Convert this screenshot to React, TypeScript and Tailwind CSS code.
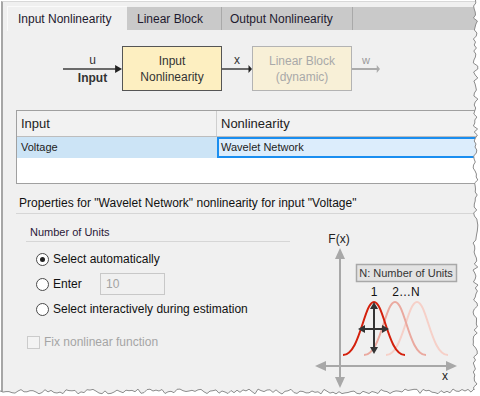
import React from 'react'

// jagged "torn paper" edge along the right and bottom of the screenshot
function tornEdge() {
  let seed = 7
  const rnd = () => {
    seed = (seed * 9301 + 49297) % 233280
    return seed / 233280
  }
  const pts: [number, number][] = []
  for (let y = 0; y <= 390; y += 3) pts.push([473 + rnd() * 5, y])
  for (let x = 474; x >= 0; x -= 3) pts.push([x, 389 + rnd() * 5])
  const line = pts.map((p, i) => `${i ? 'L' : 'M'}${p[0].toFixed(1)},${p[1].toFixed(1)}`).join(' ')
  const fill = `M480,0 ${line.replace('M', 'L')} L0,396 L480,396 Z`
  return { line, fill }
}
const edge = tornEdge()

function Arrow({ w, label, below, faded }: { w: string; label: string; below?: string; faded?: boolean }) {
  const c = faded ? '#ababab' : '#6a6a6a'
  const head = faded ? '#ababab' : '#222'
  return (
    <div className={`${w} h-[45px] flex flex-col justify-center items-center`}>
      <div className={`h-[10px] leading-[10px] ${faded ? 'text-[11px] text-[#9a9a9a]' : 'text-[12px] text-[#333]'}`}>{label}</div>
      <svg className="w-full h-[8px]" viewBox="0 0 60 8" preserveAspectRatio="none">
        <line x1="0" y1="4" x2="54" y2="4" stroke={c} strokeWidth="2" />
        <polygon points="53,0 60,4 53,8" fill={head} />
      </svg>
      <div className="h-[10px] leading-[10px] text-[12px] font-bold text-[#333]">{below}</div>
    </div>
  )
}

function Radio({ checked, children }: { checked?: boolean; children: React.ReactNode }) {
  return (
    <div className="flex items-center">
      <span className="w-[13px] h-[13px] rounded-full border border-[#4a4a4a] bg-white flex items-center justify-center">
        {checked && <span className="w-[5px] h-[5px] rounded-full bg-[#222]" />}
      </span>
      <span className="ml-[4px] text-[12px] text-[#111]">{children}</span>
    </div>
  )
}

function bell(cx: number) {
  return `M${cx - 31},355 C${cx - 14},355 ${cx - 10},302 ${cx},302 C${cx + 10},302 ${cx + 14},355 ${cx + 31},355`
}

function Figure() {
  return (
    <svg width="170" height="172" className="ml-[10px] mt-[8px] shrink-0">
      <g transform="translate(-300,-222)">
        <text x="339" y="243" textAnchor="middle" fontSize="12" fill="#222">F(x)</text>
        <line x1="340" y1="256" x2="340" y2="380" stroke="#a8a8a8" strokeWidth="2" />
        <polygon points="340,248 335,259 345,259" fill="#a8a8a8" />
        <polygon points="340,388 335,377 345,377" fill="#a8a8a8" />
        <line x1="323" y1="366" x2="449" y2="366" stroke="#a8a8a8" strokeWidth="2" />
        <polygon points="315,366 326,361 326,371" fill="#a8a8a8" />
        <polygon points="457,366 446,361 446,371" fill="#a8a8a8" />
        <text x="445" y="380" textAnchor="middle" fontSize="12" fill="#222">x</text>
        <rect x="356.5" y="264.5" width="100" height="17" fill="#e3e3e3" stroke="#a8a8a8" strokeWidth="1.5" />
        <text x="406" y="277" textAnchor="middle" fontSize="11" fill="#333">N: Number of Units</text>
        <text x="374" y="296" textAnchor="middle" fontSize="12" fill="#111">1</text>
        <text x="406" y="296" textAnchor="middle" fontSize="12" fill="#111">2…N</text>
        <path d={bell(417)} fill="none" stroke="#f6d0c8" strokeWidth="2" />
        <path d={bell(395)} fill="none" stroke="#eaa99f" strokeWidth="2" />
        <path d={bell(374)} fill="none" stroke="#d4200c" strokeWidth="2" />
        <line x1="374" y1="308" x2="374" y2="348" stroke="#333" strokeWidth="2" />
        <polygon points="374,302 370,309 378,309" fill="#333" />
        <polygon points="374,354 370,347 378,347" fill="#333" />
        <line x1="364" y1="329" x2="383" y2="329" stroke="#333" strokeWidth="2" />
        <polygon points="358,329 365,325 365,333" fill="#333" />
        <polygon points="389,329 382,325 382,333" fill="#333" />
      </g>
    </svg>
  )
}

export default function App() {
  return (
    <div className="relative w-[480px] h-[396px] overflow-hidden bg-white font-['Liberation_Sans',Arial,sans-serif] text-[#1a1a1a]">
      <div className="ml-[1px] mt-[1px] h-[395px] bg-[#f0f0f0] border-l-2 border-t border-l-[#a6a6a6] border-t-[#d8d8d8]">
        {/* tabs */}
        <div className="ml-[4px] mt-[5px] flex h-[23px] bg-[#c9c9c9] text-[12px] text-[#1e1a2e]">
          <div className="w-[120px] -mt-px h-[25px] bg-[#f0f0f0] border-l border-t border-[#fafafa] pl-[10px] flex items-center">Input Nonlinearity</div>
          <div className="w-[95px] pl-[10px] flex items-center border-r border-[#a9a9a9]">Linear Block</div>
          <div className="w-[131px] pl-[8px] flex items-center border-r border-[#a9a9a9]">Output Nonlinearity</div>
          <div className="flex-1" />
        </div>

        {/* block diagram */}
        <div className="mt-[16px] ml-[60px] flex items-start">
          <Arrow w="w-[59px]" label="u" below="Input" />
          <div className="w-[100px] h-[45px] bg-[#fdefc1] border border-[#555] flex items-center justify-center text-center text-[12px] leading-[16px] text-[#333]">
            Input<br />Nonlinearity
          </div>
          <Arrow w="w-[30px]" label="x" />
          <div className="w-[100px] h-[45px] bg-[#f8f0d7] border border-[#b3b3b3] flex items-center justify-center text-center text-[12px] leading-[16px] text-[#a9a9a9]">
            Linear Block<br />(dynamic)
          </div>
          <Arrow w="w-[28px]" label="w" faded />
        </div>

        {/* table */}
        <div className="mt-[19px] ml-[13px] w-[480px] h-[74px] border border-[#a0a0a0] bg-white flex flex-col">
          <div className="h-[26px] bg-[#f2f2f2] border-b border-[#bdbdbd] flex text-[13px] text-[#222]">
            <div className="w-[200px] pl-[4px] flex items-center border-r border-[#cfcfcf]">Input</div>
            <div className="pl-[4px] flex items-center">Nonlinearity</div>
          </div>
          <div className="h-[21px] bg-[#cce4f6] flex text-[11px] text-[#222]">
            <div className="w-[200px] pl-[4px] flex items-center">Voltage</div>
            <div className="flex-1 border-2 border-[#1a8ef0] bg-[#dcedfc] pl-[2px] flex items-center">Wavelet Network</div>
          </div>
        </div>

        {/* properties */}
        <div className="ml-[13px] mt-[11px] pl-[3px] pb-[2px] border-b border-[#d6d6d6] text-[12px] leading-[16px] text-[#111]">
          Properties for "Wavelet Network" nonlinearity for input "Voltage"
        </div>
        <div className="flex">
          <div className="ml-[23px] w-[264px]">
            <div className="mt-[11px] pl-[4px] pb-[2px] border-b border-[#d6d6d6] text-[11px] leading-[14px] text-[#2a1838]">Number of Units</div>
            <div className="pl-[10px]">
              <div className="mt-[7px] h-[20px] flex items-center">
                <Radio checked>Select automatically</Radio>
              </div>
              <div className="mt-[4px] h-[22px] flex items-center">
                <Radio><span className="inline-block w-[47px]">Enter</span></Radio>
                <div className="w-[65px] h-[22px] border border-[#c8c8c8] bg-[#f0f0f0] pl-[5px] flex items-center text-[12px] text-[#a3a3a3]">10</div>
              </div>
              <div className="mt-[4px] h-[20px] flex items-center">
                <Radio>Select interactively during estimation</Radio>
              </div>
            </div>
            <div className="mt-[13px] pl-[1px] h-[20px] flex items-center">
              <span className="w-[13px] h-[13px] border border-[#cbcbcb] bg-[#f3f3f3]" />
              <span className="ml-[4px] text-[12px] text-[#a5a5a5]">Fix nonlinear function</span>
            </div>
          </div>
          <Figure />
        </div>
      </div>

      <svg className="absolute inset-0 pointer-events-none" width="480" height="396">
        <path d={edge.fill} fill="#fff" />
        <path d={edge.line} fill="none" stroke="#8c8c8c" strokeWidth="1" />
      </svg>
    </div>
  )
}
